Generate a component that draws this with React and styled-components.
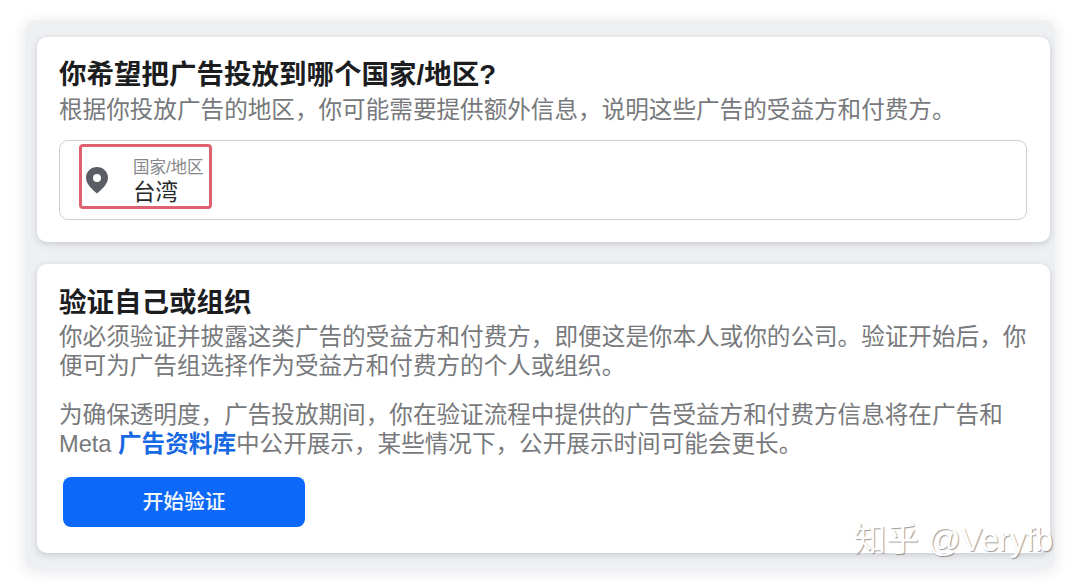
import React from "react";
import styled, { createGlobalStyle } from "styled-components";

const GlobalStyle = createGlobalStyle`
  html, body {
    margin: 0;
    padding: 0;
    background: #fff;
    overflow: hidden;
  }
  body {
    font-family: "Liberation Sans", "Noto Sans CJK SC", sans-serif;
  }
`;

const Page = styled.div`
  position: relative;
  width: 1080px;
  height: 588px;
  padding: 20px 25px 18px 25px;
  box-sizing: border-box;
`;

const Panel = styled.div`
  display: flex;
  flex-direction: column;
  gap: 22px;
  height: 100%;
  box-sizing: border-box;
  padding: 17px 5px 17px 12px;
  background: #eef0f2;
  border-radius: 12px;
  box-shadow: 0 2px 12px 4px #f0f1f3;
`;

const Card = styled.section`
  background: #fff;
  border-radius: 10px;
  padding: ${(props) => props.$padding};
  height: ${(props) => props.$height}px;
  box-sizing: border-box;
  flex: none;
  box-shadow: 0 2px 7px rgba(120, 125, 135, 0.32);
`;

const Title = styled.h2`
  margin: 0;
  font-size: 27.5px;
  line-height: 36px;
  font-weight: 700;
  color: #1c1d1f;
`;

const Body = styled.p`
  margin: ${(props) => props.$margin || 0};
  font-size: 23.6px;
  line-height: 29px;
  font-weight: 400;
  color: #77797c;
`;

const FieldBox = styled.div`
  display: flex;
  margin-top: 15px;
  height: 80px;
  box-sizing: border-box;
  padding: 3px 0 0 19px;
  border: 1px solid #cfd1d3;
  border-radius: 9px;
`;

const Highlight = styled.div`
  display: flex;
  align-items: center;
  gap: 24px;
  width: 133px;
  height: 65px;
  box-sizing: border-box;
  padding: 6px 0 0 3px;
  border: 3px solid #dc6272;
  border-radius: 4px;
`;

const FieldText = styled.div`
  display: flex;
  flex-direction: column;
  padding-top: 6px;
`;

const FieldLabel = styled.span`
  font-size: 16.5px;
  line-height: 20px;
  white-space: nowrap;
  color: #85878a;
`;

const FieldValue = styled.span`
  font-size: 22.5px;
  line-height: 31px;
  color: #27282a;
`;

const Link = styled.a`
  font-weight: 700;
  color: #1668e3;
  text-decoration: none;
`;

const PrimaryButton = styled.button`
  display: block;
  width: 242px;
  height: 50px;
  margin: 18px 0 0 4px;
  padding: 0 0 4px;
  border: 0;
  border-radius: 8px;
  background: #0b68f8;
  color: #f4f8ff;
  font-family: inherit;
  font-size: 20.8px;
  font-weight: 500;
`;

const Watermark = styled.span`
  position: absolute;
  right: 27px;
  bottom: 30px;
  font-size: 32.5px;
  line-height: 36px;
  color: #fff;
  text-shadow: 1px 1px 1px rgba(90, 90, 90, 0.6);
`;

function PinIcon() {
  return (
    <svg width="24" height="28" viewBox="0 0 24 28" aria-hidden="true">
      <path
        fillRule="evenodd"
        fill="#5a5e64"
        d="M12 1C5.9 1 1 5.8 1 11.8c0 6.4 6.6 12.1 11 15.7 4.4-3.6 11-9.3 11-15.7C23 5.8 18.1 1 12 1Zm0 7a4 4 0 1 1 0 8 4 4 0 0 1 0-8Z"
      />
    </svg>
  );
}

export default function App() {
  return (
    <Page>
      <GlobalStyle />
      <Panel>
        <Card $height={205} $padding="20px 23px 0 22px">
          <Title>你希望把广告投放到哪个国家/地区?</Title>
          <Body $margin="3px 0 0">根据你投放广告的地区，你可能需要提供额外信息，说明这些广告的受益方和付费方。</Body>
          <FieldBox>
            <Highlight>
              <PinIcon />
              <FieldText>
                <FieldLabel>国家/地区</FieldLabel>
                <FieldValue>台湾</FieldValue>
              </FieldText>
            </Highlight>
          </FieldBox>
        </Card>
        <Card $height={289} $padding="21px 23px 0 22px">
          <Title>验证自己或组织</Title>
          <Body $margin="2px 0 0">
            你必须验证并披露这类广告的受益方和付费方，即便这是你本人或你的公司。验证开始后，你便可为广告组选择作为受益方和付费方的个人或组织。
          </Body>
          <Body $margin="20px 0 0">
            为确保透明度，广告投放期间，你在验证流程中提供的广告受益方和付费方信息将在广告和 Meta <Link>广告资料库</Link>中公开展示，某些情况下，公开展示时间可能会更长。
          </Body>
          <PrimaryButton>开始验证</PrimaryButton>
        </Card>
      </Panel>
      <Watermark>知乎 @Veryfb</Watermark>
    </Page>
  );
}
